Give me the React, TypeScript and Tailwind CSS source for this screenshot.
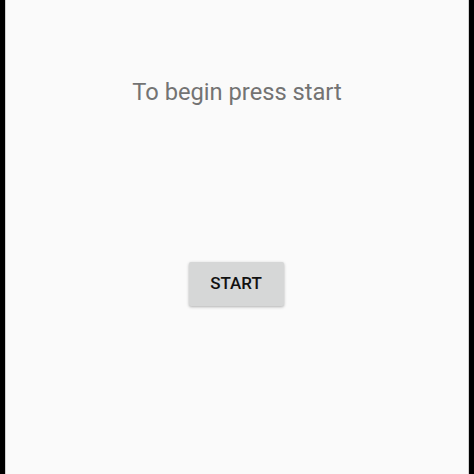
export default function App() {
  return (
    <div className="flex h-[474px] w-[474px] bg-black px-[5px]" style={{ fontFamily: 'Roboto, "Noto Sans", sans-serif' }}>
      <div className="flex flex-1 flex-col items-center border-x border-[#d0d0d0] bg-[#fafafa]">
        <p className="mt-[77px] text-[23.7px] leading-[30px] text-[#737373]">To begin press start</p>
        <button className="mt-[155px] h-[44px] w-[95px] -translate-x-px rounded-[2px] bg-[#d6d7d7] text-[17px] font-medium text-[#111] shadow-[0_1px_3px_rgba(0,0,0,0.3)]">
          START
        </button>
      </div>
    </div>
  );
}
